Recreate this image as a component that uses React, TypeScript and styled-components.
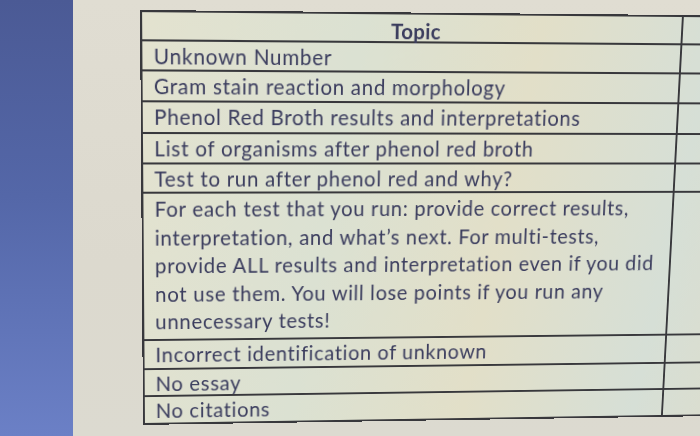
import React from 'react';
import styled, { createGlobalStyle } from 'styled-components';

// the photo is taken at an angle; this maps the flat table onto the seen quad
const PHOTO_TILT =
  'matrix3d(1.03346, 0.009533, 0, 0.00006172, 0.00761, 1.04769, 0, 0.00011547, 0, 0, 1, 0, 0, 0, 0, 1)';

const rows: { lines: string[]; height: number }[] = [
  { lines: ['Unknown Number'], height: 29 },
  { lines: ['Gram stain reaction and morphology'], height: 30 },
  { lines: ['Phenol Red Broth results and interpretations'], height: 31 },
  { lines: ['List of organisms after phenol red broth'], height: 30 },
  { lines: ['Test to run after phenol red and why?'], height: 29 },
  {
    lines: [
      'For each test that you run: provide correct results,',
      'interpretation, and what\u2019s next. For multi-tests,',
      'provide ALL results and interpretation even if you did',
      'not use them. You will lose points if you run any',
      'unnecessary tests!',
    ],
    height: 149,
  },
  { lines: ['Incorrect identification of unknown'], height: 30 },
  { lines: ['No essay'], height: 28 },
  { lines: ['No citations'], height: 29 },
];

export default function App() {
  return (
    <>
      <GlobalStyle />
      <Screen>
        <Bezel />
        <Sheet>
          <Rubric>
            <colgroup>
              <col style={{ width: 542 }} />
              <col style={{ width: 110 }} />
            </colgroup>
            <thead>
              <tr>
                <HeadCell $h={28}>Topic</HeadCell>
                <HeadCell $h={28} />
              </tr>
            </thead>
            <tbody>
              {rows.map((r) => (
                <tr key={r.lines[0]}>
                  <TopicCell $h={r.height} $multi={r.lines.length > 1}>
                    {r.lines.map((l, i) => (
                      <React.Fragment key={l}>
                        {i > 0 && <br />}
                        {l}
                      </React.Fragment>
                    ))}
                  </TopicCell>
                  <PointsCell $h={r.height} />
                </tr>
              ))}
            </tbody>
          </Rubric>
        </Sheet>
      </Screen>
    </>
  );
}

// --- Styled Components ---

const GlobalStyle = createGlobalStyle`
  html, body {
    margin: 0;
    padding: 0;
    width: 700px;
    height: 436px;
    overflow: hidden;
    background: #dedbd0;
  }
`;

const Screen = styled.div`
  display: flex;
  width: 700px;
  height: 436px;
  overflow: hidden;
  background: linear-gradient(180deg, #e0ddd2 0%, #dcd9ce 60%, #dcdad0 100%);
`;

const Bezel = styled.div`
  flex: 0 0 73px;
  height: 100%;
  background: linear-gradient(180deg, #4b5a95 0%, #5467a8 45%, #6b80c6 100%);
`;

const Sheet = styled.div`
  flex: 1;
  padding: 10px 0 0 67px;
  overflow: hidden;
`;

const Rubric = styled.table`
  border-collapse: separate;
  border-spacing: 0;
  table-layout: fixed;
  width: 654px;
  transform: ${PHOTO_TILT};
  transform-origin: 0 0;
  border-top: 2px solid #38383c;
  border-left: 2px solid #38383c;
  font-family: Lato, "Open Sans", sans-serif;
  font-size: 20.5px;
  letter-spacing: 0.7px;
  font-variant-ligatures: none;
  color: #3b3d5e;
  background: linear-gradient(
    100deg,
    #e3e2cf 0%,
    #dbe1d2 30%,
    #e2dfc8 55%,
    #d6dfd6 80%,
    #dedcca 100%
  );

  td, th {
    border-right: 2px solid #38383c;
    border-bottom: 2px solid #38383c;
  }
`;

const HeadCell = styled.th<{ $h: number }>`
  height: ${(p) => p.$h}px;
  box-sizing: border-box;
  padding: 6px 0 0;
  font-weight: 700;
  letter-spacing: 0.3px;
  line-height: 20px;
  vertical-align: top;
  text-align: center;
`;

const TopicCell = styled.td<{ $h: number; $multi: boolean }>`
  height: ${(p) => p.$h}px;
  box-sizing: border-box;
  padding: ${(p) => (p.$multi ? '1px' : '3px')} 10px 0 11px;
  line-height: ${(p) => (p.$multi ? '28.5px' : '22px')};
  vertical-align: top;
  white-space: nowrap;
`;

const PointsCell = styled.td<{ $h: number }>`
  height: ${(p) => p.$h}px;
  box-sizing: border-box;
  padding: 0;
`;
